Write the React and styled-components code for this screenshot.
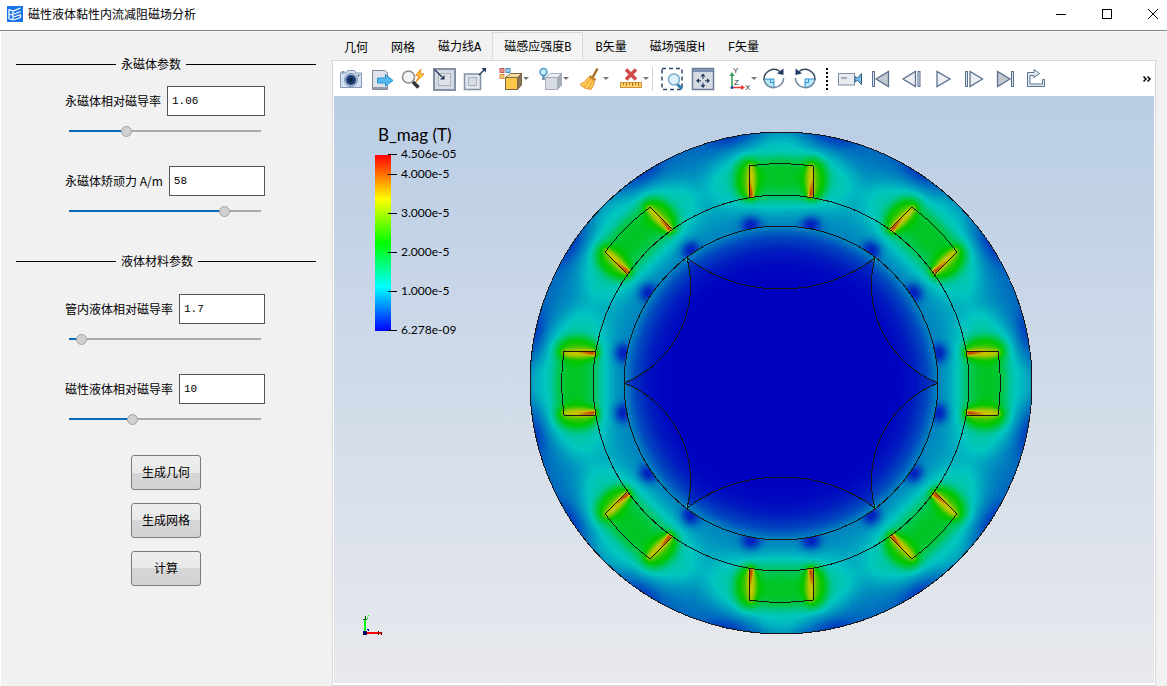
import React, { useId, useState } from "react";
import styled, { createGlobalStyle } from "styled-components";

const GlobalStyle = createGlobalStyle`
  * {
    box-sizing: border-box;
  }

  body {
    margin: 0;
    font-family: "Noto Sans CJK SC", sans-serif;
    font-size: 12px;
    line-height: 16px;
    color: #000;
    background: #f1f1f1;
  }

  button,
  input {
    font: inherit;
    color: inherit;
  }
`;

const Window = styled.div`
  display: flex;
  flex-direction: column;
  min-height: 100vh;
`;

const TitleBar = styled.header`
  display: flex;
  align-items: center;
  height: 31px;
  padding: 0 0 2px 7px;
  background: #fff;
  border-bottom: 1px solid #7d868d;
`;

const Title = styled.h1`
  flex: 1;
  margin: 0 0 0 5px;
  font-size: 12px;
  font-weight: 400;
`;

const WindowButtons = styled.div`
  display: flex;
  gap: 18px;
`;

const WindowButton = styled.button`
  display: grid;
  place-items: center;
  width: 28px;
  height: 28px;
  padding: 0;
  border: 0;
  background: none;
`;

const Main = styled.main`
  flex: 1;
  display: flex;
  border-top: 1px solid #fafafa;
`;

const Sidebar = styled.aside`
  flex: 0 0 332px;
  padding: 24px 16px 24px 15px;
  border-left: 1px solid #fff;
`;

const Section = styled.section`
  margin-bottom: 27px;
`;

const SectionHeader = styled.h2`
  display: flex;
  align-items: center;
  gap: 5px;
  margin: 0 0 ${props => (props.$loose ? 25 : 14)}px;
  font-size: 12px;
  line-height: 16px;
  font-weight: 400;

  &::before,
  &::after {
    content: "";
    width: 100px;
    height: 1px;
    background: #000;
  }

  &::after {
    flex: 1;
  }
`;

const Fields = styled.div`
  display: grid;
  grid-template-columns: 100%;
  gap: 20px;
  width: 200px;
  margin-left: 49px;
`;

const FieldRow = styled.div`
  display: flex;
  align-items: center;
  gap: 6px;
`;

const FieldLabel = styled.label`
  white-space: nowrap;
`;

const TextInput = styled.input`
  flex: 1;
  width: 0;
  min-width: 0;
  height: 30px;
  padding: 0 4px;
  border: 1px solid #555;
  background: #fff;
  font-family: "Liberation Mono", monospace;
  font-size: 11px;
`;

const Slider = styled.input`
  display: block;
  appearance: none;
  width: 192px;
  height: 11px;
  margin: 10px 4px 9px;
  background: linear-gradient(#0a6cbd, #0a6cbd) 0 4px / var(--filled) 2px
      no-repeat,
    linear-gradient(#aaa, #aaa) 0 4px / 100% 2px no-repeat;

  &::-webkit-slider-thumb {
    appearance: none;
    width: 11px;
    height: 11px;
    border: 1px solid #a2a2a2;
    border-radius: 50%;
    background: #d0d0d0;
  }
`;

const Actions = styled.div`
  display: flex;
  flex-direction: column;
  align-items: center;
  gap: 13px;
  margin-top: -6px;
`;

const ActionButton = styled.button`
  width: 70px;
  height: 35px;
  padding: 0 0 2px;
  border: 1px solid #7c7c7c;
  border-radius: 3px;
  background: linear-gradient(#eee, #e9e9e9 50%, #d6d6d6 50%, #d2d2d2);
`;

const Results = styled.div`
  flex: 1;
  min-width: 0;
  display: flex;
  flex-direction: column;
  padding-right: 11px;
`;

const Tabs = styled.div`
  display: flex;
`;

const TabButton = styled.button`
  height: 28px;
  padding: ${props => (props.$active ? "1px 11px 0" : "2px 11px 0 12px")};
  border: 1px solid #dadada;
  border-width: ${props => (props.$active ? "1px 1px 0" : "0")};
  background: ${props => (props.$active ? "#f4f4f4" : "none")};
  white-space: nowrap;
`;

const Latin = styled.span`
  font-family: "Liberation Mono", monospace;
`;

const Frame = styled.div`
  flex: 1;
  display: flex;
  flex-direction: column;
  padding: 0 1px 2px;
  background: #fff;
  border: 1px solid #d9d9d9;
`;

const Toolbar = styled.div`
  display: flex;
  align-items: center;
  height: 35px;
  padding-left: 1px;
`;

const ToolButton = styled.button`
  flex: none;
  display: flex;
  align-items: center;
  justify-content: ${props => (props.$menu ? "flex-start" : "center")};
  width: ${props => (props.$menu ? 40 : 31)}px;
  height: 32px;
  padding: 0 0 0 ${props => (props.$menu ? 9 : 0)}px;
  border: 0;
  background: none;
`;

const Caret = styled.span`
  border: 3px solid transparent;
  border-top-color: #777;
  border-bottom: 0;
`;

const Separator = styled.span`
  width: 1px;
  height: 24px;
  margin: 0 3px 0 2px;
  background: #d2d2d2;
`;

const Handle = styled.span`
  width: 2px;
  height: 22px;
  margin: 0 6px;
  background: repeating-linear-gradient(#000 0 2px, transparent 2px 4px);
`;

const MoreButton = styled.button`
  display: flex;
  margin-left: auto;
  padding: 8px 3px;
  border: 0;
  background: none;
`;

const Viewer = styled.div`
  position: relative;
  flex: 1;
  display: grid;
  place-items: center;
  padding: 0 0 13px 74px;
  background: linear-gradient(#b9cde5, #e8e9ed);
`;

const Legend = styled.figure`
  position: absolute;
  top: 30px;
  left: 41px;
  margin: 0;
  font-family: Lato, sans-serif;
`;

const LegendTitle = styled.figcaption`
  margin: 0 0 4px 3px;
  font-size: 17px;
  line-height: 18px;
`;

const LegendBody = styled.div`
  display: flex;
`;

const ColorBar = styled.div`
  width: 16px;
  height: 176px;
  margin-top: 7px;
  background: linear-gradient(#f00, #ff0 25%, #0f0 50%, #0ff 75%, #00f);
`;

const Ticks = styled.ul`
  display: grid;
  grid-template-rows: 20px 39px 39px 39px 39px 12px;
  margin: 0 0 0 -3px;
  padding: 0;
  list-style: none;
`;

const Tick = styled.li`
  display: flex;
  align-items: center;
  gap: 4px;
  height: 12px;

  &::before {
    content: "";
    width: 9px;
    height: 1px;
    background: #000;
  }
`;

const Plot = styled.svg`
  width: 504px;
  max-width: 100%;
`;

const Triad = styled.svg`
  position: absolute;
  left: 27px;
  bottom: 46px;
`;

const Icon = ({ children }) => (
  <svg width="24" height="24" viewBox="0 0 24 24" fill="none" aria-hidden="true">
    {children}
  </svg>
);

const Cube = ({ front, top, side, edge }) => (
  <g stroke={edge}>
    <path d="M6.500 10.500 L11.500 6.500 H22.500 L18.500 10.500 Z" fill={top} />
    <path d="M18.500 10.500 L22.500 6.500 V18 L18.500 22.500 Z" fill={side} />
    <rect x="6.500" y="10.500" width="12" height="12" fill={front} />
  </g>
);

const Rotate = () => (
  <>
    <path d="M12 12 V22 A10 10 0 0 1 2 12 Z" fill="#b5e6fa" />
    <path d="M3 12 H12 V21 M8.500 12 V15.500 H12" stroke="#2f90cc" />
    <path d="M2 13 A10 10 0 0 1 18 4.500" stroke="#33475f" strokeWidth="1.500" />
    <path d="M21.700 11 A10 10 0 0 1 2 13" stroke="#71879f" strokeWidth="1.500" />
    <path d="M15 6.500 L21.500 8 V1.500 Z" fill="#1f3a63" />
  </>
);

const icons = {
  camera: (
    <Icon>
      <path d="M1.500 6 H7 L8.500 3.500 H15.500 L17 6 H22.500 V20.500 H1.500 Z" fill="#d3dfef" stroke="#8399b8" />
      <rect x="2.500" y="4" width="3" height="2" fill="#8399b8" />
      <circle cx="12" cy="13" r="6.500" fill="#a9bdd6" stroke="#7890b0" />
      <circle cx="12" cy="13" r="5" fill="#1d3c72" />
      <circle cx="12" cy="13" r="2" fill="#0e2040" />
      <circle cx="19.500" cy="8.500" r="1" fill="#4d6488" />
    </Icon>
  ),
  exportView: (
    <Icon>
      <path d="M2.500 3.500 H15 L17.500 6 V22.500 H2.500 Z" fill="#dfe2e8" stroke="#7b8799" />
      <path d="M3 21 H17" stroke="#929cab" strokeWidth="2" />
      <path d="M7.500 11 H15.500 V7.500 L23 13.500 L15.500 19 V16 H7.500 Z" fill="#55b9f0" stroke="#2793d3" />
    </Icon>
  ),
  zoomFlash: (
    <Icon>
      <circle cx="7.500" cy="10" r="6" fill="#f2f5f8" stroke="#8d8d8d" strokeWidth="1.500" />
      <path d="M12 15 L17.500 20.500" stroke="#333" strokeWidth="3.500" />
      <path d="M20 2 L14.500 8.500 L18 9 L15 15 L23 7 L19 6.500 Z" fill="#ffc53d" stroke="#e78a22" />
    </Icon>
  ),
  zoomIn: (
    <Icon>
      <rect x="2" y="2" width="21" height="21" fill="#d5dbe3" stroke="#8491a5" strokeWidth="2" />
      <rect x="6.500" y="6.500" width="12" height="12" fill="#dfe3e8" stroke="#a8b1bf" />
      <path d="M2.500 2.500 L10 10" stroke="#1d3558" strokeWidth="1.300" />
      <path d="M12.500 8 V12.500 H8 Z" fill="#1d3558" />
    </Icon>
  ),
  zoomOut: (
    <Icon>
      <rect x="1.500" y="7" width="16" height="15.500" fill="#e3e7ed" stroke="#8491a5" strokeWidth="1.500" />
      <rect x="5.500" y="10.500" width="8" height="8" fill="#d8dde3" stroke="#a8b1bf" />
      <path d="M16 8 L21 3" stroke="#1d3558" strokeWidth="1.300" />
      <path d="M18.500 1 H23 V5.500 Z" fill="#1d3558" />
    </Icon>
  ),
  colorCube: (
    <Icon>
      <rect x="1" y="1.500" width="4" height="4" fill="#e58f8b" stroke="#c95750" />
      <rect x="7" y="1.500" width="4" height="4" fill="#9cccf0" stroke="#4b8fc4" />
      <rect x="1" y="7.500" width="4" height="4" fill="#f6c27a" stroke="#dd9642" />
      <Cube front="#fbc746" top="#f6dfa2" side="#8a7351" edge="#806448" />
    </Icon>
  ),
  lightCube: (
    <Icon>
      <Cube front="#d7dce3" top="#eceff3" side="#a4adb8" edge="#a5adb9" />
      <circle cx="4.500" cy="5" r="3.500" fill="#c9eafa" stroke="#4a9bcb" strokeWidth="1.500" />
      <path d="M4.500 9 V13" stroke="#6689a8" strokeWidth="2.500" />
    </Icon>
  ),
  broom: (
    <Icon>
      <path d="M18.500 1.500 L13 11.500" stroke="#a86e30" strokeWidth="2.500" />
      <path d="M10.500 9 L16.500 13" stroke="#c08030" strokeWidth="2.500" />
      <path d="M9.500 10 L15.500 14 Q15 19 12 22.500 Q5 22 1 17.500 Q7 15 9.500 10 Z" fill="#ffcd55" stroke="#df9130" />
      <path d="M11 12 Q8 17 5 20 M13.500 13.500 Q12 18 9 21.500" stroke="#df9130" />
    </Icon>
  ),
  clearRuler: (
    <Icon>
      <path d="M7 2.500 L17 12.500 M17 2.500 L7 12.500" stroke="#cf4b47" strokeWidth="3.500" />
      <rect x="1.500" y="15.500" width="21" height="5" fill="#ffd568" stroke="#cf923c" />
      <path d="M4.500 16 V18 M7.500 16 V19 M10.500 16 V18 M13.500 16 V19 M16.500 16 V18 M19.500 16 V19" stroke="#a56d25" />
    </Icon>
  ),
  selectZoom: (
    <Icon>
      <rect x="2" y="1.500" width="20" height="21" stroke="#33466c" strokeWidth="1.500" strokeDasharray="4 3" />
      <path d="M17 17 L22 22" stroke="#357ead" strokeWidth="3" />
      <circle cx="14" cy="12.500" r="5.500" fill="#dff1fa" stroke="#7baccd" strokeWidth="1.500" />
    </Icon>
  ),
  pan: (
    <Icon>
      <rect x="1.500" y="1.500" width="21" height="21" fill="#d5dbe3" stroke="#6b7d97" strokeWidth="1.500" />
      <path d="M2 3.500 H22" stroke="#7b92b2" strokeWidth="3" />
      <path d="M12 6.500 L14.500 9.500 H12.500 V12 H11.500 V9.500 H9.500 Z M12 21 L9.500 18 H11.500 V15.500 H12.500 V18 H14.500 Z M5 13.700 L8 11.200 V13.200 H10 V14.200 H8 V16.200 Z M19 13.700 L16 16.200 V14.200 H14 V13.200 H16 V11.200 Z" fill="#23395e" />
    </Icon>
  ),
  axes: (
    <Icon>
      <path d="M5 21 V8" stroke="#2a9a55" strokeWidth="1.500" />
      <path d="M2.500 9 L5 5 L7.500 9 Z" fill="#2a9a55" />
      <path d="M5 20.500 H15" stroke="#e33" strokeWidth="1.500" />
      <path d="M14 18 L18 20.500 L14 23 Z" fill="#e33" />
      <circle cx="5" cy="20.500" r="1.500" fill="#244c9c" />
      <g fill="#333" fontFamily="Liberation Sans, sans-serif" fontSize="8">
        <text x="6" y="6">Y</text>
        <text x="7" y="18">Z</text>
        <text x="18" y="23">X</text>
      </g>
    </Icon>
  ),
  rotateCw: (
    <Icon>
      <Rotate />
    </Icon>
  ),
  rotateCcw: (
    <Icon>
      <g transform="matrix(-1 0 0 1 24 0)">
        <Rotate />
      </g>
    </Icon>
  ),
  video: (
    <Icon>
      <rect x="0.500" y="6.500" width="16" height="11.500" fill="#e8ebef" stroke="#7f8ea4" />
      <path d="M3 11 H9" stroke="#a7adb7" strokeWidth="2" />
      <path d="M17 9.500 L19.500 11 L23.500 6.500 V17.500 L19.500 13.500 L17 15 Z" fill="#72bde6" stroke="#355f86" />
    </Icon>
  ),
  first: (
    <Icon>
      <rect x="3.500" y="4.500" width="2" height="15" fill="#d8e0ea" stroke="#5d7190" />
      <path d="M19.500 4.500 V19.500 L7 12 Z" fill="#c3c8cf" stroke="#5d7190" strokeWidth="1.300" />
    </Icon>
  ),
  previous: (
    <Icon>
      <path d="M15.500 4.500 V19.500 L3 12 Z" fill="#eceef2" stroke="#5d7190" strokeWidth="1.300" />
      <rect x="18" y="4.500" width="2" height="15" fill="#d8e0ea" stroke="#5d7190" />
    </Icon>
  ),
  play: (
    <Icon>
      <path d="M6 4.500 V19.500 L19 12 Z" fill="#eceef2" stroke="#5d7190" strokeWidth="1.300" />
    </Icon>
  ),
  next: (
    <Icon>
      <rect x="3.500" y="4.500" width="2" height="15" fill="#d8e0ea" stroke="#5d7190" />
      <path d="M8 4.500 V19.500 L20.500 12 Z" fill="#eceef2" stroke="#5d7190" strokeWidth="1.300" />
    </Icon>
  ),
  last: (
    <Icon>
      <path d="M4.500 4.500 V19.500 L17 12 Z" fill="#c3c8cf" stroke="#5d7190" strokeWidth="1.300" />
      <rect x="18.500" y="4.500" width="2" height="15" fill="#d8e0ea" stroke="#5d7190" />
    </Icon>
  ),
  loop: (
    <Icon>
      <path d="M10 5.500 H3.500 V19.500 H20.500 V12.500 H18.500 V17 H6 V8.500 H10 V10.500 L15.500 6.500 L10 2.500 Z" fill="#e1e8ef" stroke="#5d7190" />
    </Icon>
  )
};

const tools = [
  { icon: "camera", name: "截图" },
  { icon: "exportView", name: "导出" },
  { icon: "zoomFlash", name: "缩放到数据" },
  { icon: "zoomIn", name: "放大" },
  { icon: "zoomOut", name: "缩小" },
  { icon: "colorCube", name: "着色", menu: true },
  { icon: "lightCube", name: "光照", menu: true },
  { icon: "broom", name: "清理", menu: true },
  { icon: "clearRuler", name: "清除标尺", menu: true },
  { separator: true },
  { icon: "selectZoom", name: "框选缩放" },
  { icon: "pan", name: "平移" },
  { icon: "axes", name: "视角", menu: true },
  { icon: "rotateCw", name: "顺时针旋转" },
  { icon: "rotateCcw", name: "逆时针旋转" },
  { handle: true },
  { icon: "video", name: "录制" },
  { icon: "first", name: "第一帧" },
  { icon: "previous", name: "上一帧" },
  { icon: "play", name: "播放" },
  { icon: "next", name: "下一帧" },
  { icon: "last", name: "最后一帧" },
  { icon: "loop", name: "循环" }
];

const tabs = [
  <>几何</>,
  <>网格</>,
  <>磁力线<Latin>A</Latin></>,
  <>磁感应强度<Latin>B</Latin></>,
  <><Latin>B</Latin>矢量</>,
  <>磁场强度<Latin>H</Latin></>,
  <><Latin>F</Latin>矢量</>
];

const ticks = [
  "4.506e-05",
  "4.000e-5",
  "3.000e-5",
  "2.000e-5",
  "1.000e-5",
  "6.278e-09"
];

const angles = [0, 45, 90, 135, 180, 225, 270, 315];

const star =
  "M-94 -125 A158 158 0 0 0 94 -125 A105 105 0 0 0 157 0 A105 105 0 0 0 94 125 A158 158 0 0 0 -94 125 A105 105 0 0 0 -157 0 A105 105 0 0 0 -94 -125 Z";

// field strength 0..1 as a grey level, the "jet" filter turns it into colour
const level = v => {
  const c = Math.round(v * 255);
  return `rgb(${c},${c},${c})`;
};

const FieldPlot = () => (
  <Plot viewBox="-252 -252 504 504" role="img" aria-label="B_mag">
    <defs>
      <filter id="jet" x="-252" y="-252" width="504" height="504" filterUnits="userSpaceOnUse" colorInterpolationFilters="sRGB">
        <feComponentTransfer>
          <feFuncR type="table" tableValues="0 0 0 .78 .78" />
          <feFuncG type="table" tableValues="0 .78 .78 .78 0" />
          <feFuncB type="table" tableValues=".75 .75 0 0 0" />
        </feComponentTransfer>
      </filter>
      {[1, 2, 4, 5, 7, 9].map(size => (
        <filter key={size} id={`blur${size}`} x="-120" y="-290" width="240" height="180" filterUnits="userSpaceOnUse" colorInterpolationFilters="sRGB">
          <feGaussianBlur stdDeviation={size} />
        </filter>
      ))}
      <radialGradient id="ring" gradientUnits="userSpaceOnUse" cx="0" cy="0" r="251">
        <stop offset="0.620" stopColor={level(0.16)} />
        <stop offset="0.740" stopColor={level(0.21)} />
        <stop offset="0.820" stopColor={level(0.22)} />
        <stop offset="0.920" stopColor={level(0.17)} />
        <stop offset="1" stopColor={level(0.13)} />
      </radialGradient>
      <radialGradient id="core" gradientUnits="userSpaceOnUse" cx="0" cy="0" r="157">
        <stop offset="0.640" stopColor={level(0)} />
        <stop offset="0.760" stopColor={level(0.01)} />
        <stop offset="0.850" stopColor={level(0.04)} />
        <stop offset="0.930" stopColor={level(0.09)} />
        <stop offset="1" stopColor={level(0.17)} />
      </radialGradient>
      <clipPath id="disc">
        <circle r="251" />
      </clipPath>
    </defs>

    <g filter="url(#jet)">
      <g clipPath="url(#disc)">
        <circle r="251" fill="url(#ring)" />
        {angles.map(angle => (
          <g key={angle} transform={`rotate(${angle})`} filter="url(#blur7)" fill={level(0.06)}>
            <ellipse cx="-50" cy="-248" rx="20" ry="8" transform="rotate(-1)" />
            <ellipse cx="50" cy="-248" rx="20" ry="8" transform="rotate(1)" />
          </g>
        ))}
        {angles.map(angle => (
          <g key={angle} transform={`rotate(${angle})`}>
            <ellipse cy="-238" rx="22" ry="15" fill={level(0.22)} filter="url(#blur7)" />
            <path d="M-26 -236 H26 Q54 -230 72 -204 Q72 -188 54 -179 Q24 -172 0 -174 Q-24 -172 -54 -179 Q-72 -188 -72 -204 Q-54 -230 -26 -236 Z" fill={level(0.28)} filter="url(#blur9)" />
            <rect x="-48" y="-226" width="96" height="43" rx="20" fill={level(0.39)} filter="url(#blur5)" />
            <ellipse cy="-207" rx="26" ry="14" fill={level(0.45)} filter="url(#blur5)" />
            <g filter="url(#blur4)" fill={level(0.56)}>
              <ellipse cx="-32" cy="-203" rx="12" ry="20" />
              <ellipse cx="32" cy="-203" rx="12" ry="20" />
            </g>
            <g filter="url(#blur2)" fill={level(0.77)}>
              <ellipse cx="-30" cy="-202" rx="4" ry="18" />
              <ellipse cx="30" cy="-202" rx="4" ry="18" />
            </g>
            <g filter="url(#blur1)" fill={level(0.92)}>
              <path d="M-32 -204 L-27 -186 H-32 Z" />
              <path d="M32 -204 L27 -186 H32 Z" />
            </g>
            <g filter="url(#blur4)" fill={level(0.01)}>
              <ellipse cx="-30" cy="-158" rx="9" ry="7" />
              <ellipse cx="30" cy="-158" rx="9" ry="7" />
            </g>
          </g>
        ))}
        <circle r="157" fill="url(#core)" />
        <path d={star} fill={level(0)} opacity="0.4" />
        {[37, 143, 217, 323].map(angle => (
          <circle key={angle} cy="-155" r="2" fill={level(0.25)} transform={`rotate(${angle})`} />
        ))}
      </g>
    </g>

    <g fill="none" stroke="#161616" shapeRendering="crispEdges">
      <circle r="251" />
      <circle r="188" />
      <circle r="157" />
      {angles.map(angle => (
        <path key={angle} d="M-32 -185 V-217 A219 219 0 0 1 32 -217 V-185" transform={`rotate(${angle})`} />
      ))}
      <path d={star} />
    </g>
  </Plot>
);

const Field = ({ label, value, position }) => {
  const id = useId();
  const [text, setText] = useState(value);
  const [filled, setFilled] = useState(position);

  return (
    <div>
      <FieldRow>
        <FieldLabel htmlFor={id}>{label}</FieldLabel>
        <TextInput id={id} value={text} onChange={e => setText(e.target.value)} />
      </FieldRow>
      <Slider
        type="range"
        aria-label={label}
        min="0"
        max="100"
        value={filled}
        style={{ "--filled": `${filled}%` }}
        onChange={e => setFilled(e.target.value)}
      />
    </div>
  );
};

const Tool = ({ tool }) => {
  if (tool.separator) return <Separator />;
  if (tool.handle) return <Handle />;

  return (
    <ToolButton $menu={tool.menu} aria-label={tool.name}>
      {icons[tool.icon]}
      {tool.menu && <Caret />}
    </ToolButton>
  );
};

export default () => {
  const [active, setActive] = useState(3);

  return (
    <Window>
      <GlobalStyle />
      <TitleBar>
        <svg width="16" height="16" viewBox="0 0 16 16" fill="none" aria-hidden="true">
          <rect width="16" height="16" fill="#1b74e8" />
          <path d="M2 3.500 L6 5 L13.500 2 M2 3.500 V12.500 L6 14 M2 8 L5.500 9 M6 5 V14 M7 8 L13.500 5.500 M7 11 L13.500 8.500 M7 14 L13.500 11.500 M13.500 8.500 V11.500" stroke="#fff" strokeWidth="1.300" />
        </svg>
        <Title>磁性液体黏性内流减阻磁场分析</Title>
        <WindowButtons>
          <WindowButton aria-label="最小化">
            <svg width="10" height="10" stroke="#000">
              <path d="M0 5.500 H10" />
            </svg>
          </WindowButton>
          <WindowButton aria-label="最大化">
            <svg width="10" height="10" stroke="#000" fill="none">
              <rect x="0.500" y="0.500" width="9" height="9" />
            </svg>
          </WindowButton>
          <WindowButton aria-label="关闭">
            <svg width="10" height="10" stroke="#000">
              <path d="M0 0 L10 10 M10 0 L0 10" />
            </svg>
          </WindowButton>
        </WindowButtons>
      </TitleBar>

      <Main>
        <Sidebar>
          <Section>
            <SectionHeader>永磁体参数</SectionHeader>
            <Fields>
              <Field label="永磁体相对磁导率" value="1.06" position={29} />
              <Field label="永磁体矫顽力 A/m" value="58" position={83} />
            </Fields>
          </Section>
          <Section>
            <SectionHeader $loose>液体材料参数</SectionHeader>
            <Fields>
              <Field label="管内液体相对磁导率" value="1.7" position={4} />
              <Field label="磁性液体相对磁导率" value="10" position={32} />
            </Fields>
          </Section>
          <Actions>
            <ActionButton>生成几何</ActionButton>
            <ActionButton>生成网格</ActionButton>
            <ActionButton>计算</ActionButton>
          </Actions>
        </Sidebar>

        <Results>
          <Tabs role="tablist">
            {tabs.map((tab, i) => (
              <TabButton
                key={i}
                role="tab"
                aria-selected={i === active}
                $active={i === active}
                onClick={() => setActive(i)}
              >
                {tab}
              </TabButton>
            ))}
          </Tabs>
          <Frame>
            <Toolbar>
              {tools.map((tool, i) => (
                <Tool key={i} tool={tool} />
              ))}
              <MoreButton aria-label="更多">
                <svg width="8" height="6" fill="none" stroke="#000" strokeWidth="1.500">
                  <path d="M0.500 0.500 L3 3 L0.500 5.500 M4.500 0.500 L7 3 L4.500 5.500" />
                </svg>
              </MoreButton>
            </Toolbar>
            <Viewer>
              <Legend>
                <LegendTitle>B_mag (T)</LegendTitle>
                <LegendBody>
                  <ColorBar />
                  <Ticks>
                    {ticks.map(tick => (
                      <Tick key={tick}>{tick}</Tick>
                    ))}
                  </Ticks>
                </LegendBody>
              </Legend>
              <FieldPlot />
              <Triad width="24" height="24" viewBox="0 0 24 24" fill="none" shapeRendering="crispEdges">
                <path d="M4 20 V6" stroke="#0f0" strokeWidth="2" />
                <path d="M2 6.500 H6 M4 3 V6" stroke="#052" />
                <path d="M4 20 H21" stroke="#f00" strokeWidth="2" />
                <path d="M17.500 18 V22 M20.500 19 V22" stroke="#400" />
                <path d="M6 16.500 H8 M7 17.500 H8" stroke="#00f" />
                <path d="M7.500 2 V3 M6.500 4 V6" stroke="#0f0" />
                <rect x="2" y="18" width="4" height="4" fill="#006" />
              </Triad>
            </Viewer>
          </Frame>
        </Results>
      </Main>
    </Window>
  );
};
